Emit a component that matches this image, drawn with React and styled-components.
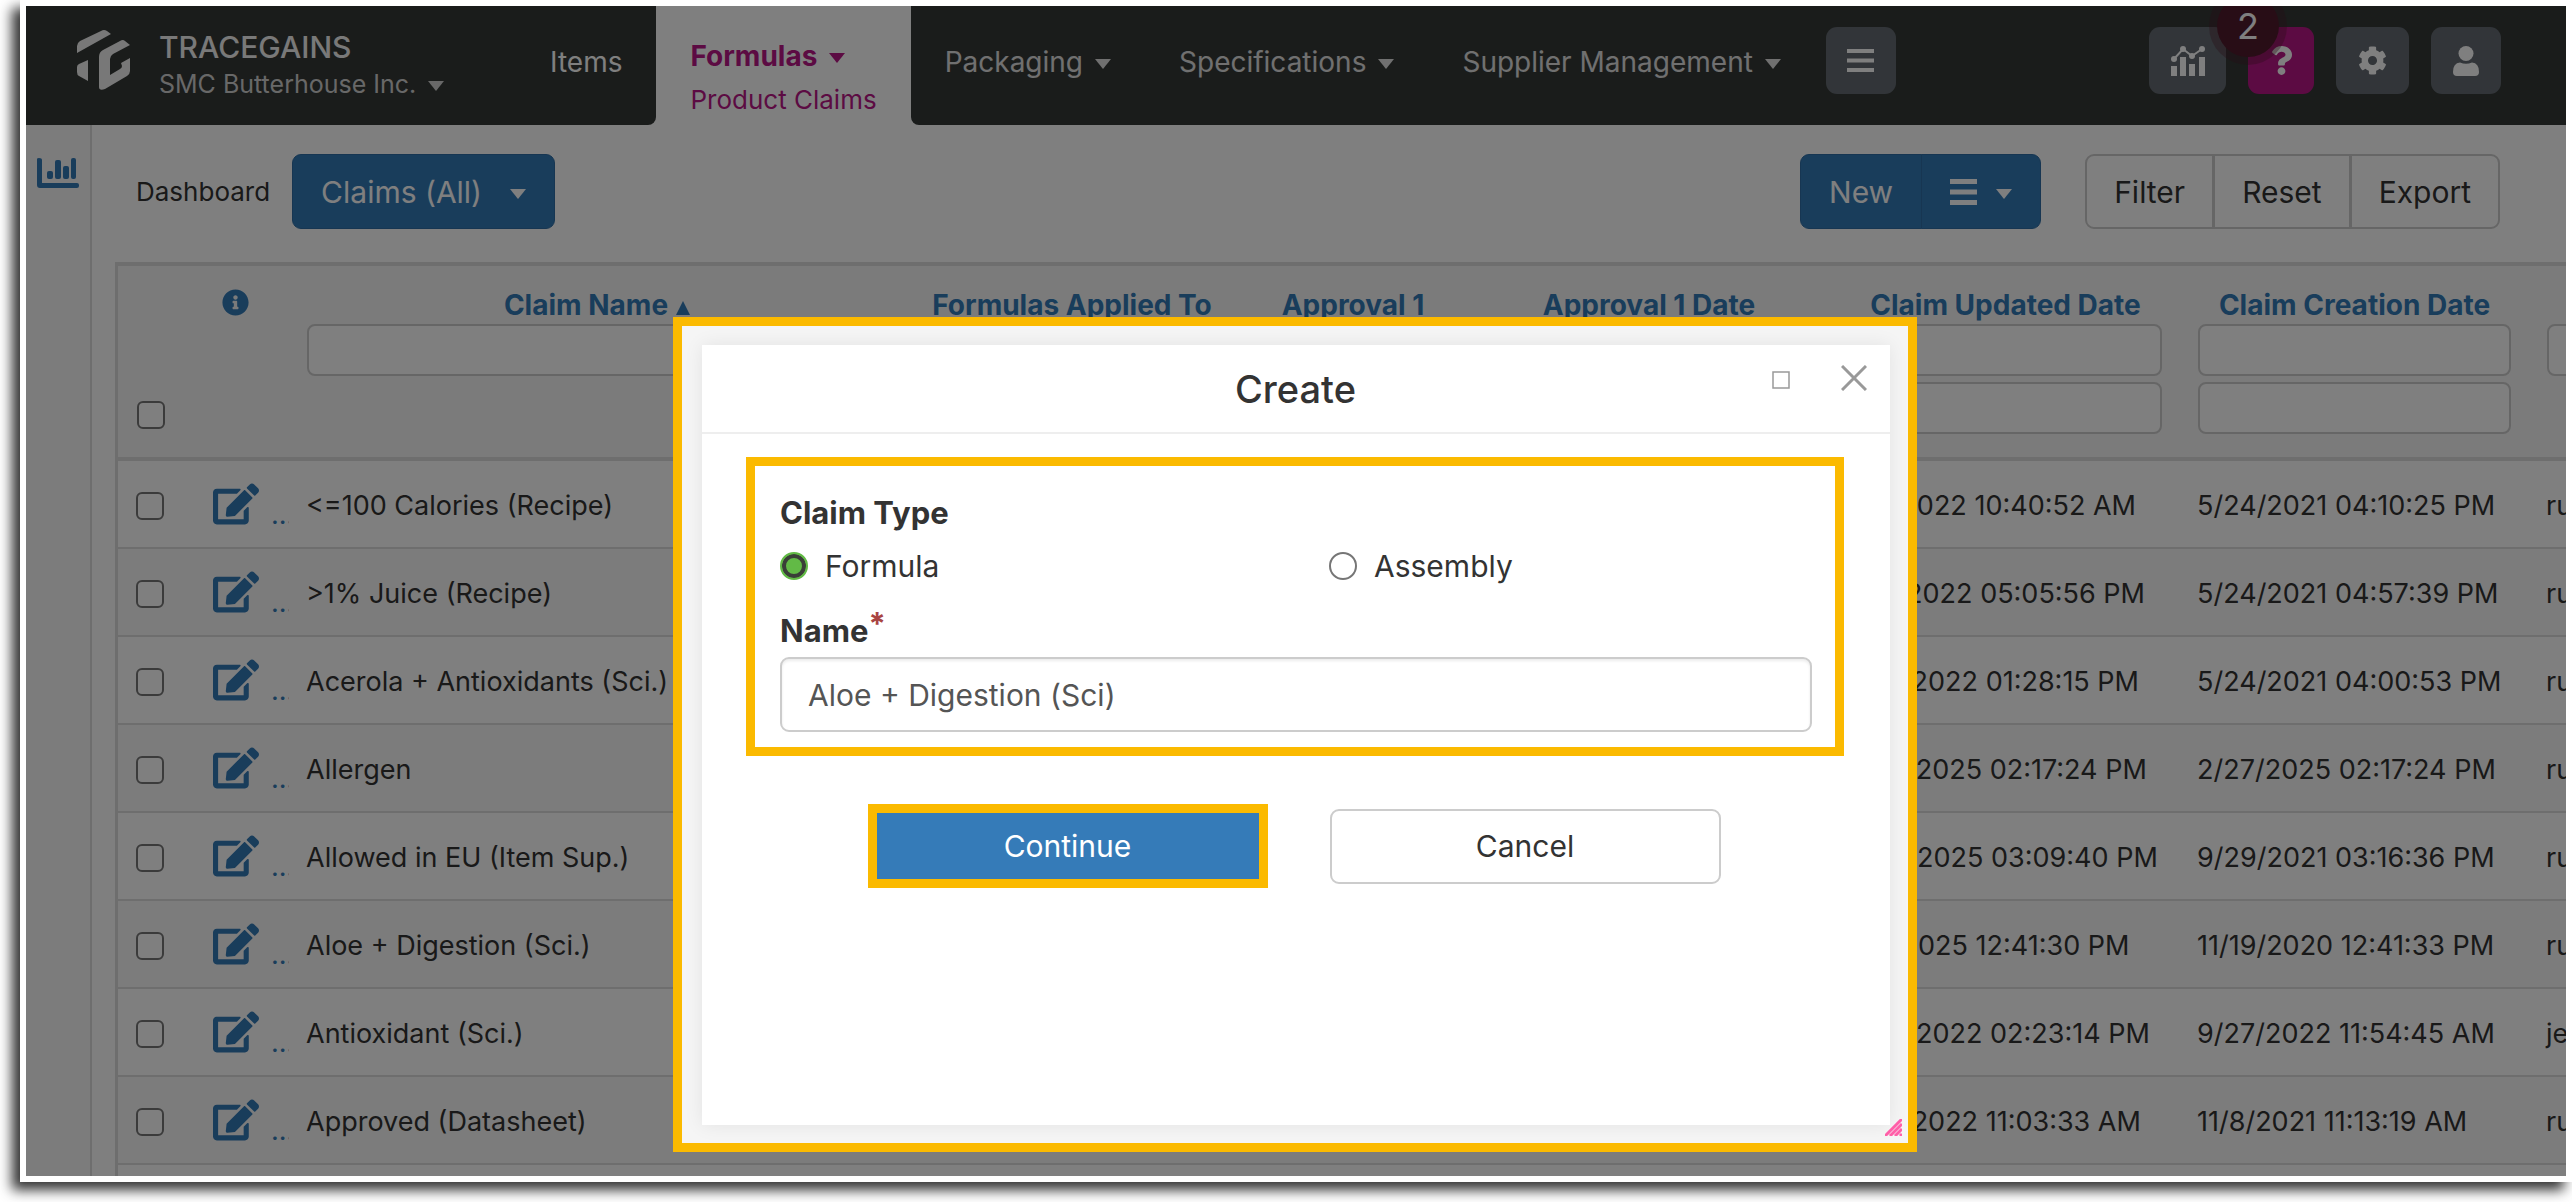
import React, { useState } from "react";
import styled, { createGlobalStyle } from "styled-components";
import { FaCog, FaEdit, FaInfoCircle, FaQuestion } from "react-icons/fa";

const amber = "#fbba00";
const blue = "#337ab7";
const line = "#dcdcdc";

const GlobalStyle = createGlobalStyle`
  * { box-sizing: border-box; }
  body { margin: 0; background: #fff; color: #333; font-family: Inter, "Liberation Sans", sans-serif; font-size: 27px; }
  button, input { font: inherit; color: inherit; }
  button { cursor: pointer; }
  a { text-decoration: none; color: inherit; }
`;

const Stage = styled.div`
  height: 100vh;
  padding: 0 0 20px 20px;
  overflow: hidden;
`;

const Sheet = styled.div`
  height: 100%;
  border: 6px solid #fff;
  box-shadow: -8px 8px 12px rgba(0, 0, 0, 0.8);
  position: relative;
`;

const Screen = styled.div`
  position: relative;
  height: 100%;
  overflow: hidden;
  display: flex;
  flex-direction: column;
  background: #fff;
`;

const Header = styled.header`
  display: flex;
  flex: none;
  height: 119px;
  color: #fff;
`;

const HeaderStart = styled.div`
  display: flex;
  background: #343836;
  border-radius: 0 0 8px 0;
`;

const HeaderEnd = styled.div`
  display: flex;
  flex: 1;
  min-width: 0;
  background: #343836;
  border-radius: 0 0 0 8px;
`;

const Brand = styled.div`
  display: flex;
  align-items: flex-start;
  gap: 28px;
  width: 490px;
  padding: 24px 0 0 51px;
`;

const BrandName = styled.div`
  font-size: 30px;
  font-weight: 500;
  line-height: 34px;
  color: #f2f2f2;
`;

const Company = styled.button`
  display: flex;
  align-items: center;
  gap: 12px;
  padding: 0;
  border: 0;
  background: none;
  font-size: 25px;
  line-height: 40px;
  color: #d0d0d0;
`;

const NavItem = styled.a`
  display: flex;
  align-items: center;
  align-self: flex-start;
  gap: 12px;
  margin-top: 34px;
  padding: 0 34px;
  font-size: 28px;
  line-height: 44px;
  white-space: nowrap;
  color: ${(p) => (p.$muted ? "#e0e0e0" : "#fff")};
`;

const ActiveTab = styled.div`
  padding: 28px 34px 0;
  color: #b81686;
  white-space: nowrap;
`;

const TabLink = styled.a`
  display: flex;
  align-items: center;
  gap: 12px;
  line-height: 44px;
  font-size: ${(p) => (p.$strong ? "28px" : "26px")};
  font-weight: ${(p) => (p.$strong ? 700 : 400)};
`;

const Caret = styled.span`
  width: 0;
  height: 0;
  margin-top: 4px;
  border: 8px solid transparent;
  border-top: 10px solid currentColor;
  border-bottom: 0;
`;

const SortCaret = styled.span`
  display: inline-block;
  margin-left: 8px;
  border: 7px solid transparent;
  border-bottom: 14px solid currentColor;
  border-top: 0;
`;

const SquareButton = styled.button`
  position: relative;
  display: flex;
  align-items: center;
  justify-content: center;
  flex: none;
  width: ${(p) => p.$width || 70}px;
  height: 67px;
  padding: 0;
  border: 0;
  border-radius: 11px;
  background: ${(p) => (p.$accent ? "#b81686" : "#646a72")};
  color: #fff;
`;

const MenuSlot = styled.div`
  padding: 21px 0 0 11px;
`;

const Tools = styled.div`
  display: flex;
  gap: 22px;
  margin-left: auto;
  padding: 21px 65px 0 0;
`;

const Badge = styled.span`
  position: absolute;
  left: -31px;
  top: -32px;
  display: flex;
  align-items: center;
  justify-content: center;
  width: 62px;
  height: 62px;
  border-radius: 50%;
  background: #501a2c;
  box-shadow: 0 0 0 8px rgba(80, 26, 44, 0.35);
  font-size: 36px;
`;

const Body = styled.div`
  display: flex;
  flex: 1;
  min-height: 0;
`;

const Sidebar = styled.aside`
  flex: none;
  width: 66px;
  padding: 32px 0 0 11px;
  background: #f8f8f8;
  border-right: 2px solid ${line};
  color: ${blue};
`;

const Main = styled.main`
  flex: 1;
  min-width: 0;
  overflow: hidden;
  padding-left: 23px;
`;

const Toolbar = styled.div`
  display: flex;
  align-items: center;
  height: 137px;
  padding: 0 66px 4px 21px;
  font-size: 30px;
`;

const Crumb = styled.span`
  margin-right: 22px;
  font-size: 26px;
`;

const BlueButton = styled.button`
  display: flex;
  align-items: center;
  justify-content: center;
  gap: ${(p) => p.$gap || 28}px;
  height: 75px;
  padding: 0 28px;
  border: 1px solid #2e6da4;
  border-radius: 9px;
  background: ${blue};
  color: #fff;
`;

const Group = styled.div`
  display: flex;
  margin-left: ${(p) => (p.$push ? "auto" : "44px")};

  > button + button { margin-left: -1px; border-top-left-radius: 0; border-bottom-left-radius: 0; }
  > button:not(:last-child) { border-top-right-radius: 0; border-bottom-right-radius: 0; }
`;

const PlainButton = styled.button`
  height: 75px;
  padding: 0 27px;
  border: 2px solid #ccc;
  border-radius: 9px;
  background: #fff;
  font-size: 30px;
`;

const Table = styled.table`
  width: 2780px;
  table-layout: fixed;
  border-collapse: separate;
  border-spacing: 0;
  border: 3px solid ${line};
  border-top-width: 4px;
`;

const Th = styled.th`
  height: 195px;
  padding: 20px 18px 0;
  vertical-align: top;
  border-bottom: 4px solid ${line};
  background: #f6f6f6;
  color: ${blue};
  font-size: 28px;
  font-weight: 700;
  line-height: 38px;
  text-align: center;
  white-space: nowrap;
`;

const CheckTh = styled(Th)`
  padding: 0 0 28px 19px;
  vertical-align: bottom;
  text-align: left;
`;

const InfoTh = styled(Th)`
  padding: 21px 14px 0 0;
`;

const FilterInput = styled.input`
  display: block;
  width: 100%;
  height: 52px;
  margin-bottom: 6px;
  border: 2px solid #ccc;
  border-radius: 8px;
  background: #fff;
`;

const Row = styled.tr`
  background: ${(p) => (p.$striped ? "#f8f8f8" : "#fff")};
`;

const Td = styled.td`
  height: 88px;
  padding: 2px 0 0 17px;
  border-bottom: 2px solid ${line};
  overflow: hidden;
  white-space: nowrap;
`;

const CheckTd = styled(Td)`
  padding: 4px 0 0 18px;
`;

const EditTd = styled(Td)`
  padding: 0 0 0 18px;
`;

const Check = styled.input`
  appearance: none;
  display: block;
  width: 28px;
  height: 28px;
  margin: 0;
  border: 2px solid #767676;
  border-radius: 6px;
  background: #fff;
`;

const EditLink = styled.a`
  display: flex;
  align-items: flex-end;
  gap: 12px;
  overflow: hidden;
  color: ${blue};

  svg { flex: none; }
`;

const Dots = styled.span`
  width: 18px;
  overflow: hidden;
  line-height: 24px;
`;

const Backdrop = styled.div`
  position: absolute;
  inset: 0;
  display: flex;
  align-items: flex-start;
  justify-content: center;
  padding: 311px 2px 0 0;
  background: rgba(0, 0, 0, 0.5);
`;

const Dialog = styled.section`
  width: 1244px;
  max-width: 100%;
  padding: 19px 18px 18px 20px;
  border: 9px solid ${amber};
  background: #f5f5f5;
  position: relative;
`;

const Panel = styled.div`
  min-height: 780px;
  background: #fff;
  box-shadow: 0 0 18px rgba(0, 0, 0, 0.08);
`;

const PanelHead = styled.div`
  display: flex;
  align-items: center;
  height: 89px;
  padding: 0 23px 0 151px;
  border-bottom: 2px solid #eee;
`;

const Title = styled.h2`
  flex: 1;
  margin: 0;
  text-align: center;
  font-size: 38px;
  font-weight: 500;
`;

const WindowButton = styled.button`
  display: flex;
  justify-content: flex-end;
  width: 26px;
  margin: 0 0 22px 26px;
  padding: 0;
  border: 0;
  background: none;
  color: #999;
`;

const WindowButtons = styled.div`
  display: flex;
  gap: 25px;
`;

const Form = styled.form`
  padding: 23px 46px 0 44px;
`;

const Highlight = styled.div`
  padding: 26px 23px 15px 25px;
  border: 9px solid ${amber};
  font-size: 30px;
`;

const TypeSet = styled.fieldset`
  margin: 0;
  padding: 0;
  border: 0;
`;

const Legend = styled.legend`
  padding: 0;
  font-size: 31px;
  font-weight: 700;
  line-height: 42px;
`;

const Choices = styled.div`
  display: grid;
  grid-template-columns: 549px 1fr;
  padding: 7px 0 14px;
`;

const Choice = styled.label`
  display: flex;
  align-items: center;
  gap: 17px;
  line-height: 50px;
`;

const Radio = styled.input`
  appearance: none;
  width: 28px;
  height: 28px;
  margin: 0;
  border: 2px solid #767676;
  border-radius: 50%;

  &:checked {
    border-color: #62ba46;
    background: #62ba46;
    box-shadow: inset 0 0 0 4px #3a3f38;
  }
`;

const NameLabel = styled.label`
  display: flex;
  font-size: 31px;
  font-weight: 700;
  line-height: 52px;
`;

const Required = styled.span`
  color: #a94442;
  line-height: 38px;
`;

const NameInput = styled.input`
  display: block;
  width: 100%;
  height: 75px;
  padding: 0 26px;
  border: 2px solid #ccc;
  border-radius: 9px;
  box-shadow: inset 0 2px 3px rgba(0, 0, 0, 0.08);
  color: #555;
`;

const Actions = styled.div`
  display: flex;
  align-items: center;
  justify-content: center;
  gap: 62px;
  padding: 48px 2px 0 0;
`;

const Continue = styled.button`
  width: 400px;
  height: 84px;
  border: 9px solid ${amber};
  background: #357bb8;
  color: #fff;
  font-size: 30px;
`;

const Cancel = styled(PlainButton)`
  width: 391px;
`;

const Grip = styled.svg`
  position: absolute;
  right: 6px;
  bottom: 7px;
`;

const Logo = () => (
  <svg width="54" height="60" viewBox="0 0 54 60" fill="#f0f0f0" aria-hidden="true">
    <path d="M0 23V16Q0 13 3 11L24 1Q27-1 30 1L34 4Z" />
    <path d="M0 42V37Q0 35 2 34L11 30V51L2 46Q0 45 0 42Z" />
    <path d="M22 57V27Q22 22 26 20L43 11Q46 9 48 11L53 15L36 24Q33 26 33 29V45L43 39Q45 38 45 36L44 33L53 28V41Q53 44 50 46L28 59Q22 61 22 57Z" />
  </svg>
);

const Bars = ({ width = 27, height = 26, bar = 5 }) => (
  <svg width={width} height={height} fill="currentColor" aria-hidden="true">
    <rect width={width} height={bar} />
    <rect y={(height - bar) / 2} width={width} height={bar} />
    <rect y={height - bar} width={width} height={bar} />
  </svg>
);

const TrendIcon = () => (
  <svg width="34" height="30" viewBox="0 0 34 30" fill="currentColor" aria-hidden="true">
    <path d="M3 13L12 3L21 10L31 3" fill="none" stroke="currentColor" strokeWidth="2" />
    <circle cx="3" cy="13" r="3" />
    <circle cx="12" cy="3" r="3" />
    <circle cx="21" cy="10" r="3" />
    <circle cx="31" cy="3" r="3" />
    <path d="M0 20h6v10H0zM9 11h6v19H9zM18 18h6v12h-6zM28 11h6v19h-6z" />
  </svg>
);

const UserIcon = () => (
  <svg width="26" height="30" viewBox="0 0 26 30" fill="currentColor" aria-hidden="true">
    <circle cx="13" cy="7.5" r="7.5" />
    <path d="M7 16.5Q13 19 19 16.5Q26 17 26 26Q26 30 22 30H4Q0 30 0 26Q0 17 7 16.5Z" />
  </svg>
);

const SideChart = () => (
  <svg width="42" height="32" viewBox="0 0 42 32" fill="currentColor" aria-hidden="true">
    <path d="M0 2Q0 1 2 1Q5 1 5 3V26H40Q42 26 42 28V29Q42 31 40 31H3Q0 31 0 28Z" />
    <rect x="10" y="14" width="6" height="8" rx="2" />
    <rect x="18" y="3" width="6" height="19" rx="2" />
    <rect x="26" y="9" width="6" height="13" rx="2" />
    <rect x="34" y="1" width="5" height="21" rx="2" />
  </svg>
);

const claims = [
  ["<=100 Calories (Recipe)", "1/11/2022 10:40:52 AM", "5/24/2021 04:10:25 PM", "ru"],
  [">1% Juice (Recipe)", "1/31/2022 05:05:56 PM", "5/24/2021 04:57:39 PM", "ru"],
  ["Acerola + Antioxidants (Sci.)", "1/28/2022 01:28:15 PM", "5/24/2021 04:00:53 PM", "ru"],
  ["Allergen", "2/27/2025 02:17:24 PM", "2/27/2025 02:17:24 PM", "ru"],
  ["Allowed in EU (Item Sup.)", "2/28/2025 03:09:40 PM", "9/29/2021 03:16:36 PM", "ru"],
  ["Aloe + Digestion (Sci.)", "3/4/2025 12:41:30 PM", "11/19/2020 12:41:33 PM", "ru"],
  ["Antioxidant (Sci.)", "9/27/2022 02:23:14 PM", "9/27/2022 11:54:45 AM", "je"],
  ["Approved (Datasheet)", "9/12/2022 11:03:33 AM", "11/8/2021 11:13:19 AM", "ru"],
  ["", "", "", ""],
];

const widths = [77, 94, 616, 334, 228, 364, 349, 349, 363];

const DateFilters = ({ name }) => (
  <>
    <FilterInput aria-label={`${name} from`} />
    <FilterInput aria-label={`${name} to`} />
  </>
);

function ClaimsTable() {
  return (
    <Table>
      <colgroup>
        {widths.map((w, i) => <col key={i} width={w} />)}
      </colgroup>
      <thead>
        <tr>
          <CheckTh><Check type="checkbox" aria-label="Select all" /></CheckTh>
          <InfoTh><FaInfoCircle size={27} aria-label="Info" /></InfoTh>
          <Th>Claim Name<SortCaret /><FilterInput aria-label="Claim Name" /></Th>
          <Th>Formulas Applied To</Th>
          <Th>Approval 1</Th>
          <Th>Approval 1 Date</Th>
          <Th>Claim Updated Date<DateFilters name="Updated" /></Th>
          <Th>Claim Creation Date<DateFilters name="Created" /></Th>
          <Th>&nbsp;<FilterInput aria-label="Created by" /></Th>
        </tr>
      </thead>
      <tbody>
        {claims.map(([name, updated, created, user], i) => (
          <Row key={i} $striped={i % 2 === 1}>
            <CheckTd><Check type="checkbox" aria-label={`Select ${name}`} /></CheckTd>
            <EditTd>
              {name && (
                <EditLink href="#edit" aria-label={`Edit ${name}`}>
                  <FaEdit size={46} />
                  <Dots>...</Dots>
                </EditLink>
              )}
            </EditTd>
            <Td>{name}</Td>
            <Td />
            <Td />
            <Td />
            <Td>{updated}</Td>
            <Td>{created}</Td>
            <Td>{user}</Td>
          </Row>
        ))}
      </tbody>
    </Table>
  );
}

function CreateDialog() {
  const [type, setType] = useState("Formula");
  const [name, setName] = useState("Aloe + Digestion (Sci)");
  return (
    <Dialog role="dialog" aria-labelledby="dialog-title">
      <Panel>
        <PanelHead>
          <Title id="dialog-title">Create</Title>
          <WindowButtons>
            <WindowButton aria-label="Maximize">
              <svg width="18" height="26" aria-hidden="true">
                <rect x="1" y="7" width="16" height="16" fill="none" stroke="currentColor" strokeWidth="1.5" />
              </svg>
            </WindowButton>
            <WindowButton aria-label="Close">
              <svg width="26" height="26" stroke="currentColor" strokeWidth="3" aria-hidden="true">
                <path d="M1 1L25 25M25 1L1 25" />
              </svg>
            </WindowButton>
          </WindowButtons>
        </PanelHead>
        <Form onSubmit={(e) => e.preventDefault()}>
          <Highlight>
            <TypeSet>
              <Legend>Claim Type</Legend>
              <Choices>
                {["Formula", "Assembly"].map((option) => (
                  <Choice key={option}>
                    <Radio type="radio" name="type" checked={type === option} onChange={() => setType(option)} />
                    {option}
                  </Choice>
                ))}
              </Choices>
            </TypeSet>
            <NameLabel htmlFor="claim-name">Name<Required>*</Required></NameLabel>
            <NameInput id="claim-name" value={name} onChange={(e) => setName(e.target.value)} />
          </Highlight>
          <Actions>
            <Continue type="submit">Continue</Continue>
            <Cancel type="button">Cancel</Cancel>
          </Actions>
        </Form>
      </Panel>
      <Grip width="17" height="17" viewBox="0 0 17 17" stroke="#ff5fa8" strokeWidth="3" aria-hidden="true">
        <path d="M0 17L17 0M5 17L17 5M10 17L17 10M15 17L17 15" />
      </Grip>
    </Dialog>
  );
}

export default function App() {
  return (
    <Stage>
      <GlobalStyle />
      <Sheet>
        <Screen>
          <Header>
            <HeaderStart>
              <Brand>
                <Logo />
                <div>
                  <BrandName>TRACEGAINS</BrandName>
                  <Company>SMC Butterhouse Inc. <Caret /></Company>
                </div>
              </Brand>
              <NavItem href="#items">Items</NavItem>
            </HeaderStart>
            <ActiveTab>
              <TabLink href="#formulas" $strong>Formulas <Caret /></TabLink>
              <TabLink href="#claims">Product Claims</TabLink>
            </ActiveTab>
            <HeaderEnd>
              <NavItem href="#packaging" $muted>Packaging <Caret /></NavItem>
              <NavItem href="#specifications" $muted>Specifications <Caret /></NavItem>
              <NavItem href="#suppliers" $muted>Supplier Management <Caret /></NavItem>
              <MenuSlot>
                <SquareButton aria-label="Menu"><Bars height={23} bar={4} /></SquareButton>
              </MenuSlot>
              <Tools>
                <SquareButton $width={77} aria-label="Analytics"><TrendIcon /></SquareButton>
                <SquareButton $width={66} $accent aria-label="Help">
                  <FaQuestion size={29} />
                  <Badge>2</Badge>
                </SquareButton>
                <SquareButton $width={73} aria-label="Settings"><FaCog size={29} /></SquareButton>
                <SquareButton $width={70} aria-label="Account"><UserIcon /></SquareButton>
              </Tools>
            </HeaderEnd>
          </Header>
          <Body>
            <Sidebar><SideChart /></Sidebar>
            <Main>
              <Toolbar>
                <Crumb>Dashboard</Crumb>
                <BlueButton>Claims (All) <Caret /></BlueButton>
                <Group $push>
                  <BlueButton>New</BlueButton>
                  <BlueButton $gap={19} aria-label="More actions"><Bars /><Caret /></BlueButton>
                </Group>
                <Group>
                  <PlainButton>Filter</PlainButton>
                  <PlainButton>Reset</PlainButton>
                  <PlainButton>Export</PlainButton>
                </Group>
              </Toolbar>
              <ClaimsTable />
            </Main>
          </Body>
        </Screen>
        <Backdrop><CreateDialog /></Backdrop>
      </Sheet>
    </Stage>
  );
}
